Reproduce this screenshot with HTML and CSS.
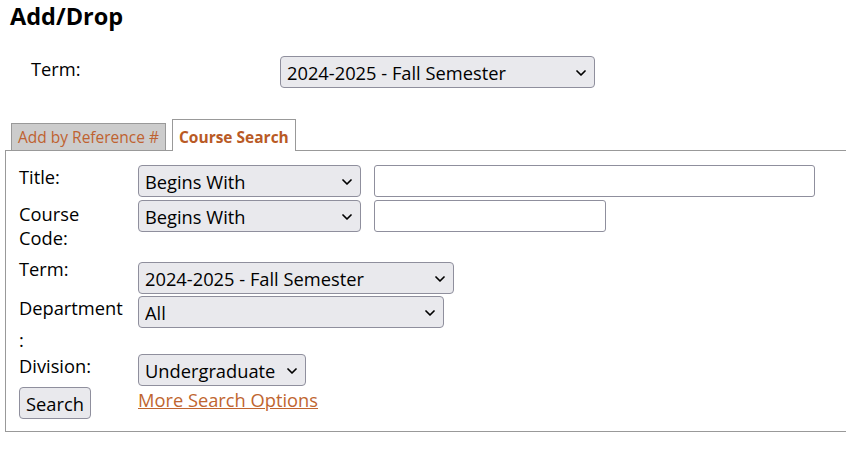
FILE: index.html
```html
<!DOCTYPE html>
<html lang="en">
<head>
<meta charset="utf-8">
<title>Add/Drop</title>
<link rel="stylesheet" href="styles.css">
</head>
<body>
<h1 class="page-title">Add/Drop</h1>
<div class="term-row">
  <label class="term-label">Term:</label>
  <span class="select-wrap w-top">
    <select class="select"><option>2024-2025 - Fall Semester</option></select>
    <svg class="chev" viewBox="0 0 10 6" width="10" height="6"><path d="M1 1 L5 5 L9 1" fill="none" stroke="#000" stroke-width="1.7" stroke-linecap="round" stroke-linejoin="round"/></svg>
  </span>
</div>
<div class="tabs">
  <div class="tab">Add by Reference #</div>
  <div class="tab tab-active">Course Search</div>
</div>
<div class="panel">
  <div class="form-grid">
    <div class="lbl">Title:</div>
    <div class="ctrl">
      <span class="select-wrap w-begins">
        <select class="select"><option>Begins With</option></select>
        <svg class="chev" viewBox="0 0 10 6" width="10" height="6"><path d="M1 1 L5 5 L9 1" fill="none" stroke="#000" stroke-width="1.7" stroke-linecap="round" stroke-linejoin="round"/></svg>
      </span>
      <input class="text-input w-title" type="text">
    </div>

    <div class="lbl lbl-course">Course Code:</div>
    <div class="ctrl">
      <span class="select-wrap w-begins">
        <select class="select"><option>Begins With</option></select>
        <svg class="chev" viewBox="0 0 10 6" width="10" height="6"><path d="M1 1 L5 5 L9 1" fill="none" stroke="#000" stroke-width="1.7" stroke-linecap="round" stroke-linejoin="round"/></svg>
      </span>
      <input class="text-input w-code" type="text">
    </div>

    <div class="lbl">Term:</div>
    <div class="ctrl ctrl-term">
      <span class="select-wrap w-term">
        <select class="select"><option>2024-2025 - Fall Semester</option></select>
        <svg class="chev" viewBox="0 0 10 6" width="10" height="6"><path d="M1 1 L5 5 L9 1" fill="none" stroke="#000" stroke-width="1.7" stroke-linecap="round" stroke-linejoin="round"/></svg>
      </span>
    </div>

    <div class="lbl">Department<span class="colon"> :</span></div>
    <div class="ctrl">
      <span class="select-wrap w-dept">
        <select class="select"><option>All</option></select>
        <svg class="chev" viewBox="0 0 10 6" width="10" height="6"><path d="M1 1 L5 5 L9 1" fill="none" stroke="#000" stroke-width="1.7" stroke-linecap="round" stroke-linejoin="round"/></svg>
      </span>
    </div>

    <div class="lbl">Division:</div>
    <div class="ctrl">
      <span class="select-wrap w-div">
        <select class="select"><option>Undergraduate</option></select>
        <svg class="chev" viewBox="0 0 10 6" width="10" height="6"><path d="M1 1 L5 5 L9 1" fill="none" stroke="#000" stroke-width="1.7" stroke-linecap="round" stroke-linejoin="round"/></svg>
      </span>
    </div>

    <div class="lbl"><button class="btn" type="button">Search</button></div>
    <div class="ctrl"><a class="link" href="#">More Search Options</a></div>
  </div>
</div>
</body>
</html>
```
FILE: styles.css
```css
* { box-sizing: border-box; }

body {
  margin: 0;
  font-family: "Open Sans", "Noto Sans", sans-serif;
  font-size: 18.3px;
  color: #000;
  background: #fff;
}

.page-title {
  margin: 1px 0 0 10px;
  font-size: 23.5px;
  line-height: 30px;
  font-weight: 700;
}

.term-row {
  display: flex;
  align-items: flex-start;
  margin-top: 25px;
  padding-left: 31px;
}

.term-label {
  width: 249px;
}

.select-wrap {
  position: relative;
  display: inline-block;
  height: 32px;
}

.select {
  appearance: none;
  -webkit-appearance: none;
  width: 100%;
  height: 32px;
  margin: 0;
  padding: 0 24px 0 6px;
  font-family: inherit;
  font-size: 18.3px;
  color: #000;
  background: #e9e9ed;
  border: 1px solid #8f8f9d;
  border-radius: 4px;
}

.chev {
  position: absolute;
  right: 9px;
  top: 14px;
  pointer-events: none;
}

.w-top { width: 315px; }
.w-begins { width: 223px; }
.w-term { width: 316px; }
.w-dept { width: 306px; }
.w-div { width: 168px; }

.text-input {
  height: 32px;
  margin: 0;
  padding: 0 6px;
  font-family: inherit;
  font-size: 18.3px;
  background: #fff;
  border: 1px solid #8f8f9d;
  border-radius: 3px;
}

.w-title { width: 441px; }
.w-code { width: 232px; }

.tabs {
  position: relative;
  z-index: 1;
  display: flex;
  align-items: flex-end;
  gap: 6px;
  margin-top: 31px;
  margin-bottom: -1px;
  padding-left: 11px;
}

.tab {
  height: 28px;
  padding: 2px 6px 0;
  font-size: 15.5px;
  line-height: 22px;
  color: #bf6230;
  background: #cccccc;
  border: 1px solid #999;
}

.tab-active {
  height: 32px;
  padding-top: 6px;
  font-weight: 700;
  color: #b95a25;
  background: #fff;
  border-bottom: none;
}

.panel {
  width: 841px;
  margin-left: 5px;
  padding: 14px 0 12px 13px;
  border: 1px solid #999;
  border-right: none;
}

.form-grid {
  display: grid;
  grid-template-columns: 119px auto;
  grid-template-rows: 35px 57px 39px 58px 33px 32px;
}

.lbl {
  max-width: 108px;
  line-height: 24px;
}

.lbl-course {
  padding-top: 2px;
}

.colon {
  display: block;
  margin-top: 8px;
}

.ctrl {
  display: flex;
  align-items: flex-start;
  gap: 13px;
}

.ctrl-term {
  padding-top: 5px;
}

.btn {
  height: 32px;
  margin: 0;
  padding: 0 6px;
  font-family: inherit;
  font-size: 18.3px;
  color: #000;
  background: #e9e9ed;
  border: 1px solid #8f8f9d;
  border-radius: 4px;
  white-space: nowrap;
}

.link {
  line-height: 24px;
  padding-top: 1px;
  color: #c0652f;
  text-decoration: underline;
}
```
